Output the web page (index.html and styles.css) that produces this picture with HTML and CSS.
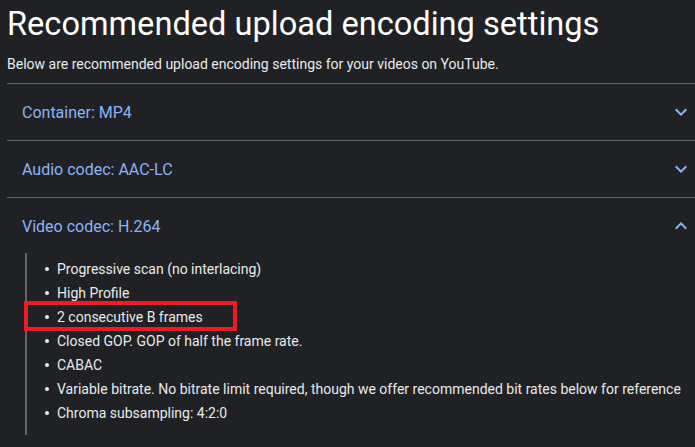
FILE: index.html
```html
<!DOCTYPE html>
<html lang="en">
<head>
<meta charset="utf-8">
<title>Recommended upload encoding settings</title>
<link rel="stylesheet" href="styles.css">
</head>
<body>
<main class="page">
  <h1 class="title">Recommended upload encoding settings</h1>
  <p class="intro">Below are recommended upload encoding settings for your videos on YouTube.</p>
  <section class="accordion">
    <div class="item">
      <div class="head">
        <span class="label">Container: MP4</span>
        <svg class="chev" viewBox="0 0 24 24" width="24" height="24"><path d="M7.41 8.59 12 13.17l4.59-4.58L18 10l-6 6-6-6z"/></svg>
      </div>
    </div>
    <div class="item">
      <div class="head">
        <span class="label">Audio codec: AAC-LC</span>
        <svg class="chev" viewBox="0 0 24 24" width="24" height="24"><path d="M7.41 8.59 12 13.17l4.59-4.58L18 10l-6 6-6-6z"/></svg>
      </div>
    </div>
    <div class="item open">
      <div class="head">
        <span class="label">Video codec: H.264</span>
        <svg class="chev" viewBox="0 0 24 24" width="24" height="24"><path d="M7.41 15.41 12 10.83l4.59 4.58L18 14l-6-6-6 6z"/></svg>
      </div>
      <ul class="list">
        <li>Progressive scan (no interlacing)</li>
        <li>High Profile</li>
        <li class="marked">2 consecutive B frames</li>
        <li>Closed GOP. GOP of half the frame rate.</li>
        <li>CABAC</li>
        <li>Variable bitrate. No bitrate limit required, though we offer recommended bit rates below for reference</li>
        <li>Chroma subsampling: 4:2:0</li>
      </ul>
    </div>
  </section>
</main>
</body>
</html>
```

FILE: styles.css
```css
html, body {
  margin: 0;
  padding: 0;
  background: #202124;
  overflow: hidden;
}

.page {
  padding: 0 0 0 7px;
  font-family: Roboto, "Liberation Sans", Arial, sans-serif;
  color: #e8eaed;
}

.title {
  margin: 0;
  padding-top: 2px;
  font-family: Roboto, "Liberation Sans", sans-serif;
  font-weight: 400;
  font-size: 32.6px;
  line-height: 44px;
  color: #ffffff;
  white-space: nowrap;
}

.intro {
  margin: 8px 0 0;
  font-size: 14px;
  line-height: 20px;
  color: #e8eaed;
  white-space: nowrap;
}

.accordion {
  margin-top: 9px;
  border-top: 1px solid #5f6368;
}

.item {
  border-bottom: 1px solid #5f6368;
}

.item.open {
  border-bottom: none;
}

.head {
  height: 56px;
  display: flex;
  align-items: center;
  justify-content: space-between;
  padding: 0 2px 0 15px;
}

.label {
  font-size: 16px;
  color: #8ab4f8;
}

.chev {
  fill: #8ab4f8;
  display: block;
}

.list {
  list-style: none;
  margin: -1px 0 0 18px;
  padding: 4px 0 10px 18px;
  border-left: 2px solid #5f6368;
}

.list li {
  position: relative;
  display: flex;
  align-items: center;
  gap: 8px;
  font-size: 14px;
  line-height: 24px;
  color: #e8eaed;
  white-space: nowrap;
}

.list li::before {
  content: "";
  width: 4px;
  height: 4px;
  border-radius: 50%;
  background: #e8eaed;
  flex: none;
}

.marked::after {
  content: "";
  position: absolute;
  left: -21px;
  top: -4px;
  width: 213px;
  height: 30px;
  box-sizing: border-box;
  border: 4px solid #ed1c24;
}
```
